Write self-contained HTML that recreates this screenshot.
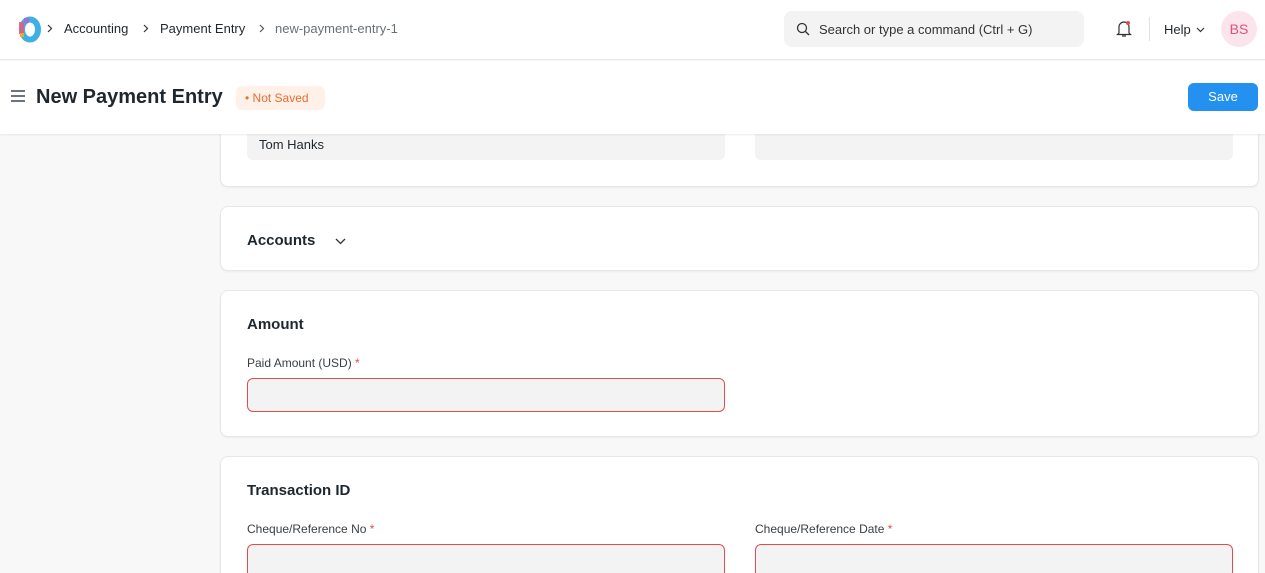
<!DOCTYPE html>
<html><head><style>
*{box-sizing:border-box;margin:0;padding:0}
html,body{width:1265px;height:573px;overflow:hidden}
body{background:#f8f8f8;font-family:"Liberation Sans",sans-serif;color:#1f272e;position:relative}
.nav{position:absolute;top:0;left:0;width:1265px;height:60px;background:#fff;border-bottom:1px solid #e8e8e8}
.ph{position:absolute;top:61px;left:0;width:1265px;height:73px;background:#fff;box-shadow:0 1px 2px rgba(0,0,0,.08)}
.t{position:absolute;white-space:nowrap}
.card{position:absolute;left:220px;width:1039px;background:#fff;border:1px solid #e5e7eb;border-radius:8px;box-shadow:0 1px 2px rgba(0,0,0,.05)}
.inp{position:absolute;background:#f3f3f4;border-radius:6px;height:34px}
.err{border:1px solid #e24c4c}
.req{color:#e24c4c}
.lbl{font-size:12px;color:#383f45}
.chev{position:absolute;top:24px}
</style></head><body>
<div class="nav">
<svg style="position:absolute;left:16px;top:15px" width="26" height="28" viewBox="0 0 26 28"><ellipse cx="14" cy="14.5" rx="8" ry="10" fill="none" stroke="#3fb0e3" stroke-width="6"/><rect x="3" y="7" width="5" height="12" fill="#e85a7b" opacity=".85"/><rect x="8" y="3" width="5" height="5" fill="#a36ce0"/><rect x="4" y="18" width="4" height="4" fill="#f5a623"/></svg>
<svg class="chev" style="left:47px" width="6" height="9"><path d="M1 1l3.5 3.5L1 8" fill="none" stroke="#333" stroke-width="1.2"/></svg>
<span class="t" style="left:64px;top:21px;font-size:13px">Accounting</span>
<svg class="chev" style="left:143px" width="6" height="9"><path d="M1 1l3.5 3.5L1 8" fill="none" stroke="#333" stroke-width="1.2"/></svg>
<span class="t" style="left:160px;top:21px;font-size:13px">Payment Entry</span>
<svg class="chev" style="left:259px" width="6" height="9"><path d="M1 1l3.5 3.5L1 8" fill="none" stroke="#555" stroke-width="1.2"/></svg>
<span class="t" style="left:275px;top:21px;font-size:13px;color:#687178">new-payment-entry-1</span>
<div style="position:absolute;left:784px;top:11px;width:300px;height:36px;background:#f3f3f4;border-radius:8px"></div>
<svg style="position:absolute;left:796px;top:22px" width="14" height="14"><circle cx="6" cy="6" r="4.5" fill="none" stroke="#333" stroke-width="1.3"/><path d="M9.5 9.5L13 13" stroke="#333" stroke-width="1.3"/></svg>
<span class="t" style="left:819px;top:22px;font-size:13px;color:#333">Search or type a command (Ctrl + G)</span>
<svg style="position:absolute;left:1115px;top:19px" width="18" height="20"><path d="M4 14V8a5 5 0 0110 0v6l1.5 1.5h-13z M7 17h4" fill="none" stroke="#333" stroke-width="1.2"/><circle cx="13" cy="4" r="2" fill="#e24c4c"/></svg>
<div style="position:absolute;left:1149px;top:17px;width:1px;height:24px;background:#e2e2e2"></div>
<span class="t" style="left:1164px;top:22px;font-size:13px">Help</span>
<svg style="position:absolute;left:1196px;top:27px" width="9" height="6"><path d="M1 1l3.5 3.5L8 1" fill="none" stroke="#333" stroke-width="1.2"/></svg>
<div style="position:absolute;left:1221px;top:11px;width:36px;height:36px;border-radius:50%;background:#fce4ec;color:#e0507a;font-size:14px;text-align:center;line-height:36px">BS</div>
</div>
<div class="ph">
<div style="position:absolute;left:11px;top:29px;width:14px;height:2px;background:#6c757d;box-shadow:0 5px #6c757d,0 10px #6c757d"></div>
<span class="t" style="left:36px;top:25px;font-size:20px;font-weight:bold">New Payment Entry</span>
<div style="position:absolute;left:236px;top:25px;width:89px;height:24px;background:#fff1e7;border-radius:6px;color:#e86c33;font-size:12px;line-height:24px;padding-left:9px">• Not Saved</div>
<div style="position:absolute;left:1188px;top:22px;width:70px;height:28px;background:#2490ef;border-radius:6px;color:#fff;font-size:13px;text-align:center;line-height:28px">Save</div>
</div>
<div class="card" style="top:120px;height:67px;border-top:none;border-radius:0 0 8px 8px;z-index:-1">
<div class="inp" style="left:26px;top:7px;width:478px;height:33px"></div>
<span class="t" style="left:38px;top:17px;font-size:13px">Tom Hanks</span>
<div class="inp" style="left:534px;top:7px;width:478px;height:33px"></div>
</div>
<div class="card" style="top:206px;height:65px"><span class="t" style="left:26px;top:25px;font-size:15px;font-weight:bold">Accounts</span>
<svg style="position:absolute;left:114px;top:31px" width="11" height="7"><path d="M1 1l4.5 4.5L10 1" fill="none" stroke="#333" stroke-width="1.3"/></svg></div>
<div class="card" style="top:290px;height:147px">
<span class="t" style="left:26px;top:25px;font-size:15px;font-weight:bold">Amount</span>
<span class="t lbl" style="left:26px;top:65px">Paid Amount (USD) <span class="req">*</span></span>
<div class="inp err" style="left:26px;top:87px;width:478px"></div>
</div>
<div class="card" style="top:456px;height:117px;border-bottom:none;border-radius:8px 8px 0 0">
<span class="t" style="left:26px;top:25px;font-size:15px;font-weight:bold">Transaction ID</span>
<span class="t lbl" style="left:26px;top:65px">Cheque/Reference No <span class="req">*</span></span>
<div class="inp err" style="left:26px;top:87px;width:478px"></div>
<span class="t lbl" style="left:534px;top:65px">Cheque/Reference Date <span class="req">*</span></span>
<div class="inp err" style="left:534px;top:87px;width:478px"></div>
</div>
</body></html>
